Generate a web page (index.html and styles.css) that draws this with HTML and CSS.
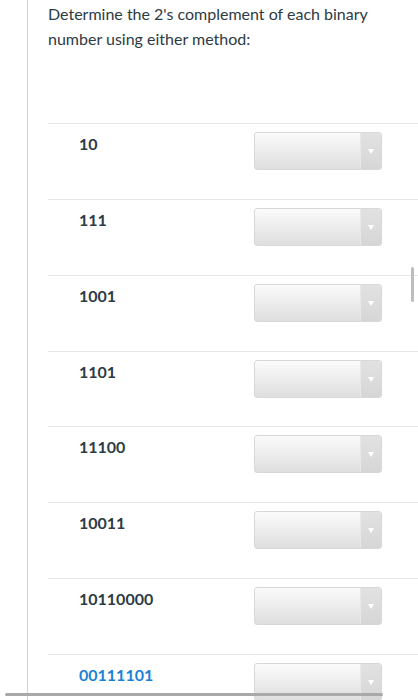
FILE: index.html
```html
<!DOCTYPE html>
<html>
<head>
<meta charset="utf-8">
<link rel="stylesheet" href="styles.css">
</head>
<body>
<div class="panel">
  <p class="question">Determine the 2's complement of each binary number using either method:</p>
  <div class="rows">
    <div class="row"><span class="num">10</span><div class="select"><span class="arrow"></span></div></div>
    <div class="row"><span class="num">111</span><div class="select"><span class="arrow"></span></div></div>
    <div class="row"><span class="num">1001</span><div class="select"><span class="arrow"></span></div></div>
    <div class="row"><span class="num">1101</span><div class="select"><span class="arrow"></span></div></div>
    <div class="row"><span class="num">11100</span><div class="select"><span class="arrow"></span></div></div>
    <div class="row"><span class="num">10011</span><div class="select"><span class="arrow"></span></div></div>
    <div class="row"><span class="num">10110000</span><div class="select"><span class="arrow"></span></div></div>
    <div class="row"><span class="num link">00111101</span><div class="select"><span class="arrow"></span></div></div>
  </div>
</div>
<div class="hscroll"></div>
<div class="vscroll"></div>
</body>
</html>
```
FILE: styles.css
```css
html, body {
  margin: 0;
  padding: 0;
  background: #ffffff;
  overflow: hidden;
  height: 700px;
}
body {
  font-family: Lato, "Open Sans", sans-serif;
  color: #2d3b45;
}
.panel {
  margin-left: 27px;
  border-left: 1px solid #cfd3d6;
  padding-left: 20px;
  min-height: 800px;
}
.question {
  margin: 0;
  padding-top: 1px;
  font-size: 16px;
  line-height: 25px;
  width: 340px;
  margin-bottom: 72px;
}
.row {
  display: grid;
  grid-template-columns: 206px 128px;
  align-items: start;
  border-top: 1px solid #e4e6e8;
  height: 75.86px;
  box-sizing: border-box;
  padding-top: 8px;
}
.num {
  padding-left: 31px;
  padding-top: 2px;
  font-size: 16px;
  line-height: 20px;
  font-weight: 700;
  color: #2d3b45;
}
.num.link {
  color: #1b82d6;
}
.select {
  position: relative;
  height: 38px;
  box-sizing: border-box;
  border: 1px solid #d8d8d8;
  border-radius: 3px;
  background: linear-gradient(#fbfbfb, #dedede);
}
.arrow {
  position: absolute;
  right: 0;
  top: 0;
  bottom: 0;
  width: 20px;
  background: linear-gradient(#e2e2e2, #d6d6d6);
  border-left: 1px solid #e8e8e8;
  border-radius: 0 2px 2px 0;
}
.arrow::after {
  content: "";
  position: absolute;
  left: 7px;
  top: 16px;
  border-left: 3px solid transparent;
  border-right: 3px solid transparent;
  border-top: 5px solid #ffffff;
}
.hscroll {
  position: fixed;
  left: 5px;
  top: 693px;
  width: 378px;
  height: 3px;
  background: #a9a9a9;
  border-radius: 2px;
}
.vscroll {
  position: fixed;
  left: 411px;
  top: 267px;
  width: 3px;
  height: 35px;
  background: #bdbdbd;
  border-radius: 2px;
}
```
